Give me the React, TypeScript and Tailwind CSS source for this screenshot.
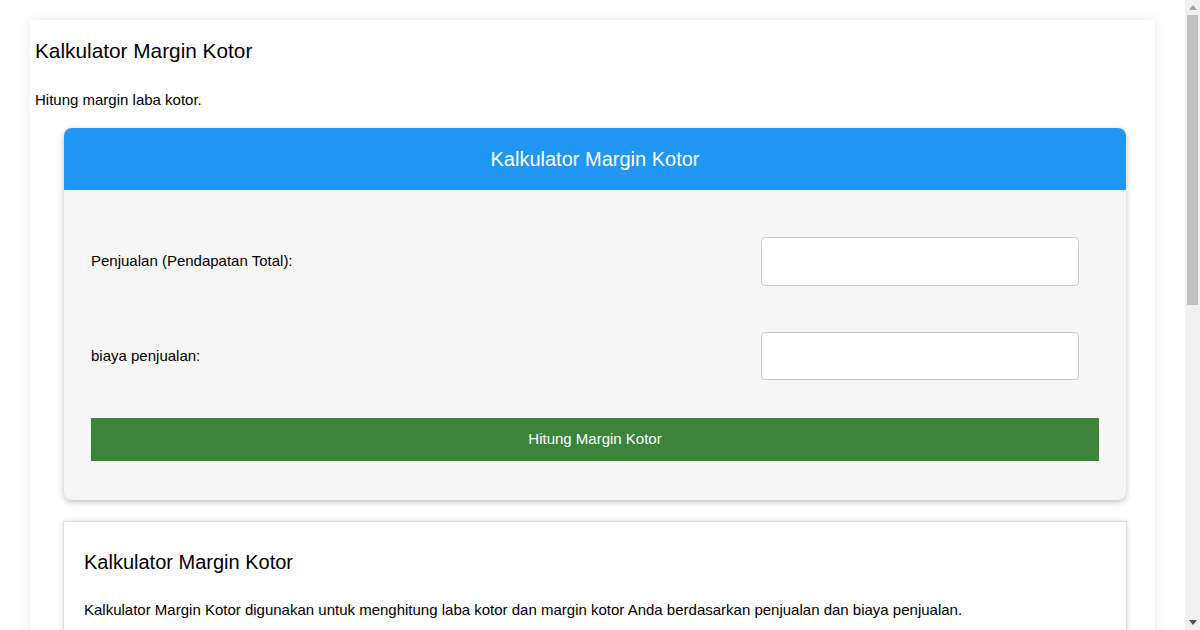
import React from 'react';

function FakeScrollbar() {
    return (
        <div className="fixed top-0 right-0 flex h-screen w-[15px] flex-col bg-[#f1f1f1]">
            <div className="flex h-[15px] items-center justify-center">
                <svg width="8" height="5" viewBox="0 0 8 5">
                    <path d="M0 5 L4 0 L8 5 Z" fill="#a3a3a3" />
                </svg>
            </div>
            <div className="mx-[2px] h-[290px] bg-[#c1c1c1]" />
            <div className="flex-1" />
            <div className="flex h-[15px] items-center justify-center">
                <svg width="8" height="5" viewBox="0 0 8 5">
                    <path d="M0 0 L8 0 L4 5 Z" fill="#505050" />
                </svg>
            </div>
        </div>
    );
}

export default function App() {
    return (
        <div className="min-h-screen bg-white pr-[15px] font-['Liberation_Sans',Arial,sans-serif] text-black">
            <div className="mx-[30px] mt-[20px] mb-[30px] bg-white px-[5px] pt-[19px] pb-[30px] shadow-[0_0_10px_rgba(0,0,0,0.1)]">
                <h1 className="text-[20.8px] leading-[24px] font-normal">Kalkulator Margin Kotor</h1>
                <p className="mt-[28px] text-[15px] leading-[17px]">Hitung margin laba kotor.</p>

                <div className="mt-[20px] ml-[29px] w-[1062px] overflow-hidden rounded-[8px] bg-[#f6f6f6] shadow-[0_2px_6px_rgba(0,0,0,0.25)]">
                    <div className="flex h-[62px] items-center justify-center bg-[#2196f3] text-[20px] text-white">
                        Kalkulator Margin Kotor
                    </div>
                    <div className="px-[27px] pt-[47px] pb-[39px]">
                        <div className="flex h-[49px] items-center justify-between">
                            <label className="text-[15px]">Penjualan (Pendapatan Total):</label>
                            <input
                                type="text"
                                className="mr-[20px] h-[49px] w-[318px] rounded-[4px] border border-[#cccccc] bg-white px-3 text-[15px] outline-none"
                            />
                        </div>
                        <div className="mt-[46px] flex h-[48px] items-center justify-between">
                            <label className="text-[15px]">biaya penjualan:</label>
                            <input
                                type="text"
                                className="mr-[20px] h-[48px] w-[318px] rounded-[4px] border border-[#cccccc] bg-white px-3 text-[15px] outline-none"
                            />
                        </div>
                        <button className="mt-[38px] flex h-[43px] w-full items-center justify-center bg-[#3b843a] text-[15px] text-white">
                            Hitung Margin Kotor
                        </button>
                    </div>
                </div>

                <div className="mt-[21px] ml-[28px] w-[1064px] border border-[#dddddd] bg-white px-[20px] pt-[29px] pb-[30px] shadow-[0_0_5px_rgba(0,0,0,0.15)]">
                    <h2 className="text-[20px] leading-[23px] font-normal">Kalkulator Margin Kotor</h2>
                    <p className="mt-[27px] text-[15px] leading-[17px]">
                        Kalkulator Margin Kotor digunakan untuk menghitung laba kotor dan margin kotor Anda berdasarkan penjualan dan biaya penjualan.
                    </p>
                    <h3 className="mt-[30px] text-[18px] leading-[21px] font-normal">Cara menggunakan kalkulator</h3>
                    <ul className="mt-[15px] list-disc pl-[30px] text-[15px] leading-[24px]">
                        <li>Masukkan total penjualan (pendapatan total) Anda.</li>
                        <li>Masukkan biaya penjualan (harga pokok penjualan).</li>
                        <li>Klik tombol &quot;Hitung Margin Kotor&quot; untuk melihat hasilnya.</li>
                    </ul>
                    <h3 className="mt-[30px] text-[18px] leading-[21px] font-normal">Rumus</h3>
                    <p className="mt-[15px] text-[15px] leading-[17px]">Laba Kotor = Penjualan - Biaya Penjualan</p>
                    <p className="mt-[12px] text-[15px] leading-[17px]">Margin Kotor = (Laba Kotor / Penjualan) × 100%</p>
                    <h3 className="mt-[30px] text-[18px] leading-[21px] font-normal">Contoh</h3>
                    <p className="mt-[15px] text-[15px] leading-[22px]">
                        Jika penjualan Anda Rp 100.000.000 dan biaya penjualan Rp 60.000.000, maka laba kotor adalah Rp 40.000.000 dan margin kotor adalah 40%.
                    </p>
                    <h3 className="mt-[30px] text-[18px] leading-[21px] font-normal">Mengapa margin kotor penting?</h3>
                    <p className="mt-[15px] text-[15px] leading-[22px]">
                        Margin kotor menunjukkan seberapa efisien perusahaan menghasilkan laba dari penjualan setelah dikurangi biaya langsung. Semakin tinggi margin kotor, semakin banyak dana yang tersedia untuk menutup biaya operasional dan menghasilkan laba bersih.
                    </p>
                </div>
            </div>
            <FakeScrollbar />
        </div>
    );
}
